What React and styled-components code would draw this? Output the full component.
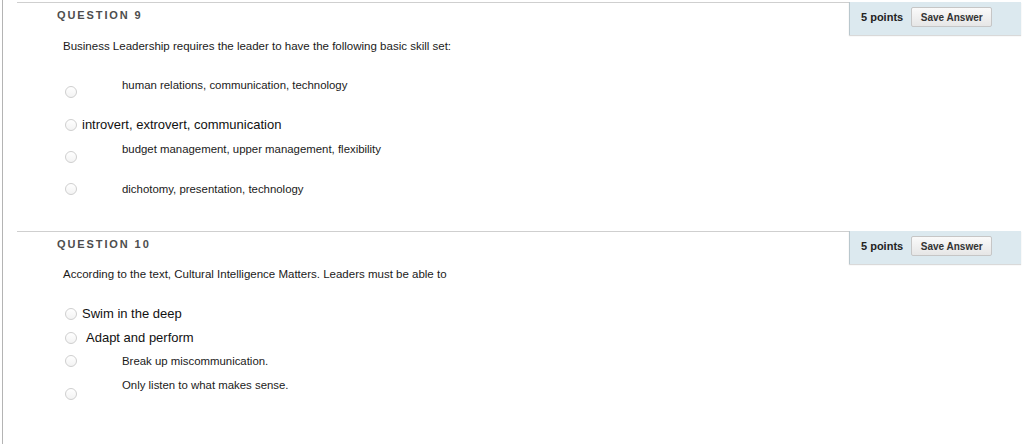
import React from "react";
import styled, { createGlobalStyle } from "styled-components";

const GlobalStyle = createGlobalStyle`
  html, body {
    margin: 0;
    padding: 0;
    background: #fff;
  }
  body {
    font-family: "Liberation Sans", Arial, Helvetica, sans-serif;
    color: #1a1a1a;
  }
`;

const questions = [
  {
    number: 9,
    points: 5,
    text: "Business Leadership requires the leader to have the following basic skill set:",
    gap: 17,
    bottom: 35,
    options: [
      { label: "human relations, communication, technology", indent: 45, drop: 14, top: 25 },
      { label: "introvert, extrovert, communication", big: true, indent: 5, top: 11 },
      { label: "budget management, upper management, flexibility", indent: 45, drop: 16, top: 9 },
      { label: "dichotomy, presentation, technology", indent: 45, top: 10 },
    ],
  },
  {
    number: 10,
    points: 5,
    text: "According to the text, Cultural Intelligence Matters. Leaders must be able to",
    gap: 16,
    bottom: 40,
    options: [
      { label: "Swim in the deep", big: true, indent: 5, top: 25 },
      { label: "Adapt and perform", big: true, indent: 9, top: 8 },
      { label: "Break up miscommunication.", indent: 45, top: 8 },
      { label: "Only listen to what makes sense.", indent: 45, drop: 18, top: 10 },
    ],
  },
];

const App = () => {
  return (
    <>
      <GlobalStyle />
      <Page>
        {questions.map((q) => (
          <Question key={q.number}>
            <Main $bottom={q.bottom}>
              <Title>QUESTION {q.number}</Title>
              <Prompt $gap={q.gap}>{q.text}</Prompt>
              <Options>
                {q.options.map((o) => (
                  <Option key={o.label} $top={o.top}>
                    <Radio />
                    <Label $indent={o.indent} $drop={o.drop || 0} $big={o.big}>
                      {o.label}
                    </Label>
                  </Option>
                ))}
              </Options>
            </Main>
            <Points>
              <PointsText>{q.points} points</PointsText>
              <SaveButton type="button">Save Answer</SaveButton>
            </Points>
          </Question>
        ))}
      </Page>
    </>
  );
};

export default App;

const Page = styled.div`
  margin-left: 2px;
  min-height: 444px;
  box-sizing: border-box;
  border-left: 1px solid #b4b4b4;
  padding: 2px 3px 0 14px;
`;

const Question = styled.section`
  display: grid;
  grid-template-columns: 1fr 172px;
  align-items: start;
`;

const Main = styled.div`
  border-top: 1px solid #cfcfcf;
  padding: 5px 0 ${(p) => p.$bottom}px 0;
`;

const Title = styled.h2`
  margin: 0;
  padding-left: 40px;
  font-size: 11px;
  line-height: 14px;
  font-weight: bold;
  letter-spacing: 1.9px;
  color: #4d4d4d;
`;

const Prompt = styled.p`
  margin: ${(p) => p.$gap}px 0 0;
  padding-left: 46px;
  font-size: 11.5px;
  line-height: 14px;
`;

const Options = styled.ul`
  list-style: none;
  margin: 0;
  padding: 0 0 0 48px;
`;

const Option = styled.li`
  display: flex;
  align-items: center;
  margin-top: ${(p) => p.$top}px;
`;

const Radio = styled.span`
  flex: none;
  width: 10px;
  height: 10px;
  border-radius: 50%;
  border: 1px solid #cfcfcf;
  background: linear-gradient(#ffffff, #f3f3f3);
`;

const Label = styled.span`
  margin-left: ${(p) => p.$indent}px;
  padding-bottom: ${(p) => p.$drop}px;
  font-size: ${(p) => (p.$big ? "13px" : "11.4px")};
  line-height: ${(p) => (p.$big ? "16px" : "14px")};
  color: ${(p) => (p.$big ? "#111" : "#1a1a1a")};
`;

const Points = styled.div`
  display: flex;
  align-items: center;
  gap: 8px;
  height: 33px;
  box-sizing: border-box;
  padding: 0 0 3px 11px;
  background: #dce9ef;
  border-left: 1px solid #b9c7cd;
  box-shadow: 0 1px 1px rgba(0, 0, 0, 0.15);
`;

const PointsText = styled.span`
  font-size: 11px;
  font-weight: bold;
  color: #222;
`;

const SaveButton = styled.button`
  width: 81px;
  height: 20px;
  padding: 0;
  font-family: "Liberation Sans", Arial, sans-serif;
  font-size: 10px;
  font-weight: bold;
  color: #333;
  border: 1px solid #c6c6c6;
  border-radius: 2px;
  background: linear-gradient(#fafafa, #e6e6e6);
  cursor: pointer;
`;
